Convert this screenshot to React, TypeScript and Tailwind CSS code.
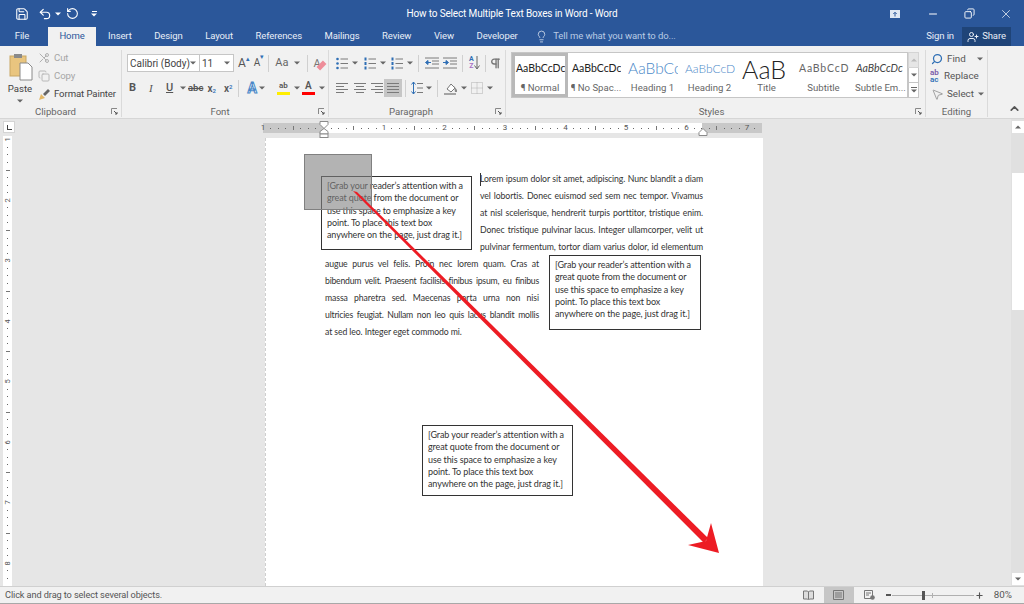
import { Save, Undo2, RotateCw, Minus, X, Copy, Lightbulb, UserPlus, Scissors, Search, MousePointer2, ChevronUp, Plus, Pilcrow } from 'lucide-react';

const ui = "font-['Roboto',sans-serif]";

function Caret({ className = '', color = '#666' }: { className?: string; color?: string }) {
  return (
    <svg width="6" height="4" viewBox="0 0 6 4" className={`shrink-0 ${className}`}>
      <path d="M0 0.5h6L3 3.5z" fill={color} />
    </svg>
  );
}

function Launcher() {
  return (
    <svg width="7" height="7" viewBox="0 0 7 7" className="shrink-0">
      <path d="M0.5 6V0.5H6" stroke="#888" fill="none" />
      <path d="M3 3l3 3M6 4v2H4" stroke="#555" fill="none" />
    </svg>
  );
}

function Sep({ className = '' }: { className?: string }) {
  return <div className={`w-px h-[17px] bg-[#d0d0d0] shrink-0 ${className}`} />;
}

function Lines({ kind }: { kind: 'left' | 'center' | 'right' | 'justify' }) {
  const rows = {
    left: ['M0 1.5h12', 'M0 4.5h8', 'M0 7.5h12', 'M0 10.5h8'],
    center: ['M0 1.5h12', 'M2 4.5h8', 'M0 7.5h12', 'M2 10.5h8'],
    right: ['M0 1.5h12', 'M4 4.5h8', 'M0 7.5h12', 'M4 10.5h8'],
    justify: ['M0 1.5h12', 'M0 4.5h12', 'M0 7.5h12', 'M0 10.5h12'],
  }[kind];
  return (
    <svg width="12" height="12" viewBox="0 0 12 12" className="shrink-0">
      {rows.map((d) => (
        <path key={d} d={d} stroke="#7a7a7a" strokeWidth="1" />
      ))}
    </svg>
  );
}

function ListIcon({ numbered }: { numbered?: boolean }) {
  return (
    <svg width="12" height="13" viewBox="0 0 12 13" className="shrink-0">
      {[2, 6.5, 11].map((y) =>
        numbered ? (
          <rect key={y} x="0.5" y={y - 1.5} width="2" height="3" fill="#2f6fb5" />
        ) : (
          <circle key={y} cx="1.5" cy={y} r="1.3" fill="#2f6fb5" />
        ),
      )}
      {[2, 6.5, 11].map((y) => (
        <path key={y} d={`M4.5 ${y}h7.5`} stroke="#7a7a7a" />
      ))}
    </svg>
  );
}

function Indent({ flip }: { flip?: boolean }) {
  return (
    <svg width="14" height="12" viewBox="0 0 14 12" className="shrink-0">
      <path d="M0 1h14M7 4h7M7 7h7M0 11h14" stroke="#7a7a7a" />
      <path d={flip ? 'M0 5.5h4M3 3.5l2.5 2-2.5 2z' : 'M6 5.5H2M3 3.5L0.5 5.5l2.5 2z'} stroke="#2f6fb5" fill="#2f6fb5" />
    </svg>
  );
}

function StyleItem({ preview, label, previewClass, selected, wide }: { preview: string; label: string; previewClass: string; selected?: boolean; wide?: boolean }) {
  return (
    <div className={`${wide ? 'w-[57px]' : 'w-[56px]'} h-full shrink-0 flex flex-col items-center overflow-hidden ${selected ? 'border-[3px] border-[#b9b9b9]' : 'border-[3px] border-white'}`}>
      <div className={`h-[25px] w-full flex items-center overflow-hidden whitespace-nowrap pl-[1px] ${previewClass}`}>{preview}</div>
      <div className="text-[9.600px] leading-[13px] text-[#666] whitespace-nowrap">{label}</div>
    </div>
  );
}

function Group({ label, className, launcher = true }: { label: string; className: string; launcher?: boolean }) {
  return (
    <div className={`absolute -bottom-[2px] left-0 right-0 h-[14px] flex items-center justify-center text-[9.600px] text-[#666] ${className}`}>
      {label}
      {launcher && (
        <span className="absolute right-[3px] top-[3px]">
          <Launcher />
        </span>
      )}
    </div>
  );
}

function Ribbon() {
  return (
    <div className={`h-[73px] bg-[#f1f1f1] border-b border-[#d6d6d6] flex pt-[4px] relative shrink-0 ${ui}`}>
      {/* Clipboard */}
      <div className="relative w-[122px] h-[67px] border-r border-[#dadada] flex shrink-0">
        <div className="w-[38px] flex flex-col items-center pl-[2px]">
          <svg width="24" height="28" viewBox="0 0 24 28" className="mt-[3px] ml-[2px]">
            <rect x="1" y="3" width="16" height="20" fill="#e9c57f" stroke="#c9a765" />
            <rect x="5" y="1" width="8" height="4" fill="#8a8a8a" />
            <path d="M11 10h8l4 4v13H11z" fill="#fff" stroke="#8a8a8a" />
          </svg>
          <div className="text-[9.600px] leading-[14px] text-[#444] mt-[1px]">Paste</div>
          <Caret className="mt-[3px]" />
        </div>
        <div className="flex flex-col text-[9.600px] tracking-[-0.1px] leading-[18px] -mt-[1px]">
          <div className="flex items-center gap-[4px] text-[#a6a6a6]"><Scissors size={12} color="#b0b0b0" className="-scale-x-100" />Cut</div>
          <div className="flex items-center gap-[4px] text-[#a6a6a6]"><Copy size={12} color="#b8b8b8" />Copy</div>
          <div className="flex items-center gap-[3px] text-[#444] whitespace-nowrap">
            <svg width="13" height="13" viewBox="0 0 13 13" className="shrink-0">
              <path d="M1 12l2-6 4 4z" fill="#e3b765" />
              <path d="M5 6l5-5 2 2-5 5z" fill="#666" />
            </svg>
            Format Painter
          </div>
        </div>
        <Group label="Clipboard" className="pr-[10px]" />
      </div>

      {/* Font */}
      <div className="relative w-[207px] h-[67px] border-r border-[#dadada] shrink-0 pl-[5px]">
        <div className="flex items-center h-[18px] mt-[4px]">
          <div className="w-[73px] h-[18px] bg-white border border-[#c6c6c6] flex items-center justify-between pl-[2px] pr-[3px] text-[10px] text-[#444] whitespace-nowrap">Calibri (Body)<Caret /></div>
          <div className="w-[34px] h-[18px] bg-white border border-l-0 border-[#c6c6c6] flex items-center justify-between pl-[2px] pr-[3px] text-[10px] text-[#444]">11<Caret /></div>
          <span className="ml-[4px] text-[12px] text-[#555] leading-none relative">A<span className="text-[7px] text-[#2f6fb5] absolute -top-[1px] -right-[4px]">▴</span></span>
          <span className="ml-[8px] text-[10px] text-[#555] leading-none relative">A<span className="text-[7px] text-[#2f6fb5] absolute -top-[4px] -right-[4px]">▾</span></span>
          <Sep className="ml-[8px]" />
          <span className="ml-[6px] text-[11px] text-[#666]">Aa</span>
          <Caret className="ml-[5px]" />
          <Sep className="ml-[7px]" />
          <span className="ml-[6px] relative text-[11px] text-[#777] leading-none">A<span className="absolute left-[3px] top-[5px] w-[9px] h-[5px] bg-[#ee8d99] -rotate-45" /></span>
        </div>
        <div className="flex items-center h-[18px] mt-[7px] text-[11px] text-[#555]">
          <span className="ml-[2px] w-[8px] font-bold">B</span>
          <span className="ml-[12px] w-[6px] italic font-['Liberation_Serif',serif]">I</span>
          <span className="ml-[11px] w-[9px] underline font-medium">U</span>
          <Caret className="ml-[5px]" />
          <span className="ml-[2px] text-[9.500px] line-through font-semibold">abc</span>
          <span className="ml-[4px] font-semibold text-[10px]">x<sub className="text-[#2f6fb5] text-[6px]">2</sub></span>
          <span className="ml-[8px] font-semibold text-[10px]">x<sup className="text-[#2f6fb5] text-[6px]">2</sup></span>
          <Sep className="ml-[6px]" />
          <span className="ml-[8px] text-[14px] leading-none font-bold text-white [-webkit-text-stroke:1px_#4a89c8]">A</span>
          <Caret className="ml-[2px]" />
          <div className="ml-[12px] w-[13px] flex flex-col items-center text-[8px] leading-[10px] text-[#555] font-semibold">ab<div className="w-[13px] h-[3px] bg-[#ffee00] mt-[1px]" /></div>
          <Caret className="ml-[4px]" />
          <div className="ml-[2px] w-[13px] flex flex-col items-center text-[10px] leading-[10px] text-[#555] font-semibold">A<div className="w-[13px] h-[3px] bg-[#f00] mt-[1px]" /></div>
          <Caret className="ml-[4px]" />
        </div>
        <Group label="Font" className="pr-[10px]" />
      </div>

      {/* Paragraph */}
      <div className="relative w-[177px] h-[67px] border-r border-[#dadada] shrink-0 pl-[7px]">
        <div className="flex items-center h-[18px] mt-[4px]">
          <ListIcon />
          <Caret className="ml-[4px]" />
          <span className="ml-[6px] flex"><ListIcon numbered /></span>
          <Caret className="ml-[4px]" />
          <span className="ml-[5px] flex"><ListIcon numbered /></span>
          <Caret className="ml-[4px]" />
          <Sep className="ml-[5px]" />
          <span className="ml-[6px] flex"><Indent /></span>
          <span className="ml-[4px] flex"><Indent flip /></span>
          <Sep className="ml-[5px]" />
          <div className="ml-[6px] flex items-center text-[7px] leading-[7px] font-bold">
            <span className="flex flex-col items-center"><span className="text-[#2f6fb5]">A</span><span className="text-[#a86fc5]">Z</span></span>
            <svg width="6" height="14" viewBox="0 0 6 14"><path d="M3 0v12M0.5 9.5L3 13l2.500-3.500" stroke="#666" fill="none" /></svg>
          </div>
          <Sep className="ml-[5px]" />
          <Pilcrow size={13} color="#777" className="ml-[3px]" strokeWidth={2.5} />
        </div>
        <div className="flex items-center h-[18px] mt-[7px]">
          <Lines kind="left" />
          <span className="ml-[6px] flex"><Lines kind="center" /></span>
          <span className="ml-[5px] flex"><Lines kind="right" /></span>
          <span className="ml-[1px] w-[18px] h-[18px] bg-[#c6c6c6] flex items-center justify-center"><Lines kind="justify" /></span>
          <Sep className="ml-[3px]" />
          <svg width="12" height="14" viewBox="0 0 12 14" className="ml-[5px] shrink-0">
            <path d="M2.500 1v12M0.5 3.500L2.500 1l2 2.500M0.500 10.500L2.500 13l2-2.500" stroke="#2f6fb5" fill="none" />
            <path d="M6 2.500h6M6 7h6M6 11.500h6" stroke="#7a7a7a" />
          </svg>
          <Caret className="ml-[3px]" />
          <Sep className="ml-[5px]" />
          <svg width="14" height="14" viewBox="0 0 14 14" className="ml-[6px] shrink-0">
            <path d="M3 8l4-5 4 4-4 4z" fill="#fff" stroke="#777" />
            <path d="M10 5l3 4v2h-2z" fill="#8a8a8a" />
            <path d="M0 13h12" stroke="#8a8a8a" strokeWidth="1.5" />
          </svg>
          <Caret className="ml-[3px]" />
          <svg width="12" height="12" viewBox="0 0 12 12" className="ml-[4px] shrink-0">
            <path d="M0.5 0.5h11v11h-11zM6 0.500v11M0.500 6h11" stroke="#b0b0b0" fill="none" strokeDasharray="1 1" />
          </svg>
          <Caret className="ml-[4px]" />
        </div>
        <Group label="Paragraph" className="pr-[12px]" />
      </div>

      {/* Styles */}
      <div className="relative w-[420px] h-[67px] border-r border-[#dadada] shrink-0 pl-[5px]">
        <div className="flex h-[46px] mt-[2px]">
          <div className="w-[397px] h-[46px] bg-white border border-[#c6c6c6] flex overflow-hidden">
            <StyleItem preview="AaBbCcDc" label="¶ Normal" previewClass="text-[10.500px] text-[#222] font-['Lato',sans-serif]" selected />
            <StyleItem preview="AaBbCcDc" label="¶ No Spac..." previewClass="text-[10.500px] text-[#222] font-['Lato',sans-serif]" />
            <StyleItem preview="AaBbCc" label="Heading 1" previewClass="text-[15.500px] text-[#4a89c8] font-['Lato',sans-serif] font-light" wide />
            <StyleItem preview="AaBbCcD" label="Heading 2" previewClass="text-[12px] text-[#4a89c8] font-['Lato',sans-serif] font-light" wide />
            <StyleItem preview="AaB" label="Title" previewClass="text-[25px] leading-[20px] text-[#222] font-['Lato',sans-serif] font-light" wide />
            <StyleItem preview="AaBbCcD" label="Subtitle" previewClass="text-[10.500px] tracking-[0.8px] text-[#666] font-['Lato',sans-serif]" wide />
            <StyleItem preview="AaBbCcDc" label="Subtle Em..." previewClass="text-[10.500px] italic text-[#444] font-['Lato',sans-serif]" wide />
          </div>
          <div className="w-[11px] h-[46px] flex flex-col">
            <div className="h-[16px] bg-[#e6e6e6] border border-[#d4d4d4] flex items-center justify-center"><Caret className="rotate-180" color="#bbb" /></div>
            <div className="h-[15px] bg-white border border-t-0 border-[#c6c6c6] flex items-center justify-center"><Caret /></div>
            <div className="h-[15px] bg-white border border-t-0 border-[#c6c6c6] flex flex-col items-center justify-center gap-[1px]"><div className="w-[6px] h-px bg-[#666]" /><Caret /></div>
          </div>
        </div>
        <Group label="Styles" className="pr-[8px]" />
      </div>

      {/* Editing */}
      <div className="relative w-[62px] h-[67px] border-r border-[#dadada] shrink-0 pl-[5px] flex flex-col text-[9.800px] leading-[18px] text-[#555]">
        <div className="flex items-center gap-[4px] h-[17px]"><Search size={12} color="#2f6fb5" strokeWidth={2.5} className="-scale-x-100" />Find<Caret className="ml-[7px]" /></div>
        <div className="flex items-center gap-[3px] -ml-[1px]"><span className="text-[8px] leading-[7px] w-[11px] font-semibold text-[#7a5aa8]">ab<br /><span className="text-[#2f6fb5]">ac</span></span>Replace</div>
        <div className="flex items-center gap-[3px]"><MousePointer2 size={13} color="#777" strokeWidth={1.2} />Select<Caret className="ml-[1px]" /></div>
        <Group label="Editing" launcher={false} className="" />
      </div>
      <ChevronUp size={13} color="#555" strokeWidth={3} className="absolute right-[3px] bottom-[3px]" />
    </div>
  );
}

function HRuler() {
  const cells = Array.from({ length: 66 }, (_, i) => i);
  return (
    <div className="flex h-[10px] items-center ml-[247px] relative">
      {cells.map((i) => {
        const inch = (i - 8) / 8;
        const white = i >= 8 && i < 58;
        return (
          <div key={i} className={`w-[7.575px] h-[10px] shrink-0 flex items-center text-[8px] text-[#555] ${white ? 'bg-white' : 'bg-[#c8c8c8]'}`}>
            <div className="w-0 flex justify-center">
              {i % 8 === 0 && i !== 8 ? Math.abs(inch) : i % 4 === 0 && i !== 8 ? <div className="w-px h-[4px] shrink-0 bg-[#777]" /> : i !== 8 ? <div className="w-px h-px shrink-0 bg-[#666]" /> : null}
            </div>
          </div>
        );
      })}
      <svg width="10" height="17" viewBox="0 0 10 17" className="absolute left-[56px] -top-[2px]">
        <path d="M1 0.500h8v3L5 7.500 1 3.500zM5 7.500L9 10.500v2.500H1v-2.500z" fill="#fff" stroke="#8a8a8a" />
        <rect x="1" y="13" width="8" height="3.500" fill="#fff" stroke="#8a8a8a" />
      </svg>
      <svg width="10" height="8" viewBox="0 0 10 8" className="absolute left-[435px] top-[5px]">
        <path d="M1 7.500v-3l4-4 4 4v3z" fill="#fff" stroke="#8a8a8a" />
      </svg>
    </div>
  );
}

function VRuler() {
  const cells = Array.from({ length: 59 }, (_, i) => i);
  return (
    <div className="flex flex-col w-[9px] ml-[3px] bg-white mt-[3px] flex-1">
      {cells.map((i) => (
        <div key={i} className="h-[7.570px] shrink-0 flex items-center justify-center text-[7.500px] leading-[7px] text-[#555]">
          {i % 8 === 0 ? <span className="-rotate-90">{i / 8 + 1}</span> : i % 4 === 0 ? <div className="w-[4px] h-px bg-[#777]" /> : <div className="w-px h-px bg-[#666]" />}
        </div>
      ))}
    </div>
  );
}

function QuoteBox({ className }: { className: string }) {
  return (
    <div className={`absolute bg-white border border-[#333] pl-[5px] pt-[3px] text-[9px] tracking-[-0.1px] leading-[12.250px] text-[#333] whitespace-nowrap ${className}`}>
      <div>[Grab your reader’s attention with a</div>
      <div>great quote from the document or</div>
      <div>use this space to emphasize a key</div>
      <div>point. To place this text box</div>
      <div>anywhere on the page, just drag it.]</div>
    </div>
  );
}

const topLines = [
  'Lorem ipsum dolor sit amet, adipiscing. Nunc blandit a diam',
  'vel lobortis. Donec euismod sed sem nec tempor. Vivamus',
  'at nisl scelerisque, hendrerit turpis porttitor, tristique enim.',
  'Donec tristique pulvinar lacus. Integer ullamcorper, velit ut',
  'pulvinar fermentum, tortor diam varius dolor, id elementum',
];

function Page() {
  const just = '[text-align:justify] [text-align-last:justify] whitespace-nowrap';
  return (
    <div className="relative ml-[249px] w-[498px] flex-1 bg-white border-l border-dashed border-[#cfcfcf] font-['Lato',sans-serif] text-[8.700px] tracking-[-0.1px] leading-[16.950px] text-[#333]">
      <div className="ml-[214px] w-[223px] pt-[33px] relative">
        <div className="absolute left-0 top-[35px] w-px h-[13px] bg-[#333]" />
        {topLines.map((l) => (
          <div key={l} className={just}>{l}</div>
        ))}
      </div>
      <div className="ml-[59px] w-[214px]">
        <div className={just}>augue purus vel felis. Proin nec lorem quam. Cras at</div>
        <div className={`${just} tracking-[-0.24px]`}>bibendum velit. Praesent facilisis finibus ipsum, eu finibus</div>
        <div className={just}>massa pharetra sed. Maecenas porta urna non nisi</div>
        <div className={`${just} tracking-[-0.2px]`}>ultricies feugiat. Nullam non leo quis lacus blandit mollis</div>
        <div className="whitespace-nowrap">at sed leo. Integer eget commodo mi.</div>
      </div>
      <QuoteBox className="left-[55px] top-[38px] w-[151px] h-[74px]" />
      <QuoteBox className="left-[283px] top-[117px] w-[152px] h-[75px]" />
      <QuoteBox className="left-[156px] top-[287px] w-[151px] h-[71px]" />
      <div className="absolute left-[38px] top-[16px] w-[68px] h-[56px] bg-[#808080]/60 border border-[#808080]" />
    </div>
  );
}

export default function App() {
  const tabs = ['Insert', 'Design', 'Layout', 'References', 'Mailings', 'Review', 'View', 'Developer'];
  return (
    <div className={`w-[1024px] h-[604px] flex flex-col overflow-hidden relative bg-[#e6e6e6] ${ui}`}>
      {/* title bar */}
      <div className="h-[27px] bg-[#2b579a] flex items-center text-white relative shrink-0">
        <Save size={14} strokeWidth={1.8} className="ml-[15px]" />
        <Undo2 size={14} strokeWidth={2} className="ml-[9px]" />
        <Caret className="ml-[3px]" color="#fff" />
        <RotateCw size={13} strokeWidth={2} className="ml-[5px] -scale-x-100" />
        <div className="ml-[12px] flex flex-col items-center gap-[1px]"><div className="w-[5px] h-px bg-white" /><Caret color="#fff" /></div>
        <div className="absolute inset-x-0 top-[6px] text-center text-[10px] tracking-[-0.15px] leading-[15px]">How to Select Multiple Text Boxes in Word - Word</div>
        <div className="ml-auto flex items-center">
          <svg width="10" height="8" viewBox="0 0 10 8" className="shrink-0"><rect width="10" height="8" fill="#dfe7f3" /><path d="M5 6.500V2.500M3.300 4L5 2.300 6.700 4" stroke="#2b579a" fill="none" /></svg>
          <Minus size={12} className="ml-[27px]" />
          <Copy size={11} className="ml-[25px] -scale-x-100" />
          <X size={14} strokeWidth={1.2} className="ml-[24px] mr-[11px]" />
        </div>
      </div>
      {/* tabs */}
      <div className="h-[19px] bg-[#2b579a] flex items-stretch text-[9.500px] tracking-[-0.1px] text-[#e8eef7] shrink-0 relative">
        <div className="ml-[15px] w-[14px] flex items-center justify-center">File</div>
        <div className="ml-[19px] w-[48px] bg-[#f1f1f1] text-[#2b579a] flex items-center justify-center">Home</div>
        <div className="ml-[12px] flex items-center gap-[22.500px]">
          {tabs.map((t) => (
            <span key={t}>{t}</span>
          ))}
          <span className="flex items-center gap-[5px] text-[#b9cbe4] -ml-[5px]"><Lightbulb size={13} strokeWidth={1.4} color="#dfe7f3" />Tell me what you want to do...</span>
        </div>
        <div className="ml-auto flex items-stretch">
          <span className="flex items-center mr-[8px]">Sign in</span>
          <span className="w-[49px] mr-[13px] bg-[#1f4478] flex items-center justify-center gap-[3px]"><UserPlus size={12} />Share</span>
        </div>
      </div>
      <Ribbon />

      {/* document area */}
      <div className="flex-1 flex min-h-0">
        <div className="w-[16px] flex flex-col shrink-0">
          <div className="ml-[3px] mt-[2px] w-[12px] h-[12px] bg-white border border-[#d4d4d4] flex items-center justify-center">
            <div className="w-[5px] h-[5px] border-l border-b border-[#444]" />
          </div>
          <VRuler />
        </div>
        <div className="flex-1 flex flex-col min-w-0 pt-[4px]">
          <HRuler />
          <div className="h-[5px] shrink-0" />
          <Page />
        </div>
        <div className="w-[13px] bg-[#e0e0e0] flex flex-col items-stretch pl-px pt-[2px] shrink-0">
          <div className="h-[12px] bg-white flex items-center justify-center"><Caret className="rotate-180" /></div>
          <div className="h-[40px]" />
          <div className="h-[137px] bg-white" />
          <div className="flex-1" />
          <div className="h-[12px] bg-white flex items-center justify-center mb-px"><Caret /></div>
        </div>
      </div>

      {/* status bar */}
      <div className="h-[18px] bg-[#f1f1f1] border-t border-[#d0d0d0] border-b border-b-[#a8a8a8] flex items-stretch text-[9.800px] text-[#555] shrink-0">
        <div className="pl-[5px] flex items-center text-[9.200px] tracking-[-0.1px]">Click and drag to select several objects.</div>
        <div className="ml-auto flex items-center">
          <svg width="11" height="10" viewBox="0 0 11 10" className="mr-[10px]"><path d="M0.500 1h4l1 1 1-1h4v8h-4l-1 1-1-1h-4zM5.500 2v7" stroke="#777" fill="#ddd" /></svg>
          <div className="w-[30px] self-stretch bg-[#c6c6c6] flex items-center justify-center"><svg width="11" height="10" viewBox="0 0 11 10"><path d="M0.500 0.500h10v9h-10zM2 3h7M2 5h7M2 7h7" stroke="#777" fill="none" /></svg></div>
          <svg width="11" height="10" viewBox="0 0 11 10" className="ml-[10px]"><path d="M0.500 0.500h8v8h-8zM2 3h5M2 5h3" stroke="#777" fill="none" /><circle cx="8.500" cy="7.500" r="2.300" fill="#777" /></svg>
          <div className="ml-[11px] w-[5px] h-[2px] bg-[#555]" />
          <div className="ml-[1px] w-[82px] relative flex items-center">
            <div className="w-full h-px bg-[#b0b0b0]" />
            <div className="absolute left-[30px] w-[3px] h-[9px] bg-[#555]" />
            <div className="absolute left-[40px] w-px h-[5px] bg-[#b0b0b0]" />
          </div>
          <Plus size={9} strokeWidth={3} color="#555" className="ml-[1px]" />
          <span className="ml-[10px] mr-[12px]">80%</span>
        </div>
      </div>

      {/* annotation arrow */}
      <svg className="absolute inset-0 pointer-events-none" width="1024" height="604" viewBox="0 0 1024 604">
        <path d="M353 191 L357 192 L708 538 L704 543 Z" fill="#ed1c24" />
        <path d="M719 553 L688 545 L706 541 L711 523 Z" fill="#ed1c24" />
      </svg>
    </div>
  );
}
